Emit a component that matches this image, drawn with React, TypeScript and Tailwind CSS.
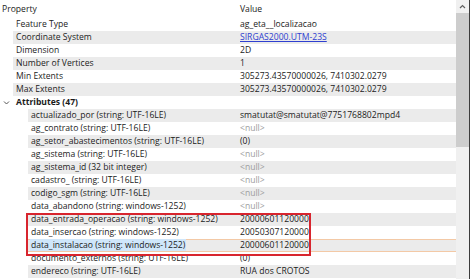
import React from 'react'

type Row = { name: string; value: string; kind?: 'null' | 'link'; child?: boolean }

const top: Row[] = [
  { name: 'Feature Type', value: 'ag_eta__localizacao' },
  { name: 'Coordinate System', value: 'SIRGAS2000.UTM-23S', kind: 'link' },
  { name: 'Dimension', value: '2D' },
  { name: 'Number of Vertices', value: '1' },
  { name: 'Min Extents', value: '305273.43570000026, 7410302.0279' },
  { name: 'Max Extents', value: '305273.43570000026, 7410302.0279' },
]

const attrs: Row[] = [
  { name: 'actualizado_por (string: UTF-16LE)', value: 'smatutat@smatutat@7751768802mpd4' },
  { name: 'ag_contrato (string: UTF-16LE)', value: '<null>', kind: 'null' },
  { name: 'ag_setor_abastecimentos (string: UTF-16LE)', value: '(0)' },
  { name: 'ag_sistema (string: UTF-16LE)', value: '<null>', kind: 'null' },
  { name: 'ag_sistema_id (32 bit integer)', value: '<null>', kind: 'null' },
  { name: 'cadastro_ (string: UTF-16LE)', value: '<null>', kind: 'null' },
  { name: 'codigo_sgm (string: UTF-16LE)', value: '<null>', kind: 'null' },
  { name: 'data_abandono (string: windows-1252)', value: '<null>', kind: 'null' },
  { name: 'data_entrada_operacao (string: windows-1252)', value: '20000601120000' },
  { name: 'data_insercao (string: windows-1252)', value: '20050307120000' },
  { name: 'data_instalacao (string: windows-1252)', value: '20000601120000' },
  { name: 'documento_externos (string: UTF-16LE)', value: '(0)' },
  { name: 'endereco (string: UTF-16LE)', value: 'RUA dos CROTOS' },
]

function PropRow({ row, banded, child, selected }: { row: Row; banded: boolean; child?: boolean; selected?: boolean }) {
  const bg = banded ? 'bg-[#ebebeb]' : 'bg-white'
  return (
    <div className="flex h-[13px]">
      <div className={child ? 'w-[28px] shrink-0' : 'w-[13px] shrink-0'} />
      <div
        className={`flex flex-1 items-center ${bg} ${
          selected ? 'border-y border-[#f3c9a6]' : ''
        }`}
      >
        <div className={`${child ? 'w-[209px]' : 'w-[224px]'} shrink-0 pl-[3px] truncate`}>
          <span className={selected ? 'bg-[#cfe6fa] px-[1px] -mx-[1px]' : ''}>{row.name}</span>
        </div>
        <div className="flex-1 pl-[3px] truncate">
          {row.kind === 'link' ? (
            <span className="text-[#2f3fd0] underline">{row.value}</span>
          ) : row.kind === 'null' ? (
            <span className="text-[#9c9c9c]">{row.value}</span>
          ) : (
            row.value
          )}
        </div>
      </div>
    </div>
  )
}

export default function App() {
  return (
    <div
      className="relative flex w-[474px] h-[279px] overflow-hidden bg-white text-[8.6px] leading-[13px] text-[#1b1b1b]"
      style={{ fontFamily: '"Open Sans", "Noto Sans", sans-serif' }}
    >
      <div className="w-[456px] shrink-0 flex flex-col">
        {/* header */}
        <div className="flex h-[18px] items-center text-[#222]">
          <div className="w-[237px] pl-[2px]">Property</div>
          <div className="pl-[3px]">Value</div>
        </div>

        {top.map((r, i) => (
          <PropRow key={r.name} row={r} banded={i % 2 === 1} />
        ))}

        {/* Attributes group */}
        <div className="flex h-[13px] items-center">
          <svg width="13" height="13" viewBox="0 0 13 13" className="shrink-0">
            <path d="M4 5.5 L6.5 8 L9 5.5" fill="none" stroke="#555" strokeWidth="1" />
          </svg>
          <span className="pl-[3px] font-bold">Attributes (47)</span>
        </div>

        {attrs.map((r, i) => (
          <PropRow key={r.name} row={r} banded={i % 2 === 0} child selected={i === 10} />
        ))}
      </div>

      {/* scrollbar */}
      <div className="w-[13px] shrink-0 flex flex-col bg-[#f0f0f0]">
        <div className="h-[13px] flex items-center justify-center">
          <svg width="9" height="9" viewBox="0 0 9 9">
            <path d="M2 6 L4.5 3.5 L7 6" fill="none" stroke="#606060" strokeWidth="1.2" />
          </svg>
        </div>
        <div className="h-[134px] bg-[#cdcdcd]" />
      </div>
      <div className="w-px shrink-0 bg-[#3c3c3c]" />
      <div className="flex-1 bg-white" />

      {/* highlight box */}
      <div className="absolute left-[26px] top-[213px] w-[285px] h-[43px] border-2 border-[#d8252e] pointer-events-none" />
    </div>
  )
}
